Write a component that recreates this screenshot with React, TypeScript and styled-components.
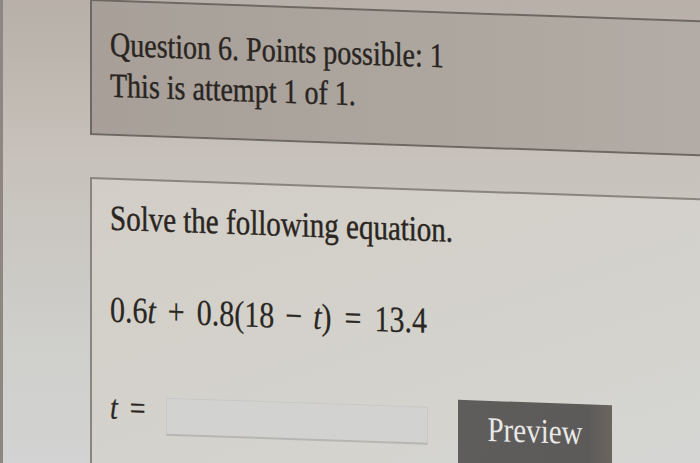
import React from "react";
import styled, { createGlobalStyle } from "styled-components";

const Global = createGlobalStyle`
  html, body { margin: 0; padding: 0; }
  body { width: 700px; height: 463px; overflow: hidden; background: #c8c3bc; }
`;

const Page = styled.div`
  box-sizing: border-box;
  width: 700px;
  height: 463px;
  overflow: hidden;
  border-left: 3px solid #8e8680;
  padding-left: 87px;
  background: linear-gradient(180deg, #b7afa8 0%, #c7c2bb 35%, #cfcfcc 75%, #d2d3d2 100%);
`;

const Sheet = styled.div`
  display: flex;
  flex-direction: column;
  gap: 42px;
  width: 660px;
  transform: skewY(2deg);
  transform-origin: 0 0;
`;

const InfoPanel = styled.section`
  box-sizing: border-box;
  margin-top: -1px;
  height: 136px;
  border: 2px solid #6f6862;
  border-right: none;
  background: linear-gradient(90deg, #a79f98 0%, #ada69f 50%, #b2ada6 100%);
  padding: 24px 0 0 18px;
`;

const QuestionPanel = styled.section`
  box-sizing: border-box;
  height: 320px;
  border-top: 2px solid #8a857f;
  border-left: 2px solid #8a857f;
  background: linear-gradient(160deg, #d2cec7 0%, #d4d2cc 50%, #d5d7d6 100%);
  padding: 20px 0 0 18px;
`;

const Line = styled.p<{ $size?: number; $lh?: number; $mt?: number }>`
  margin: ${(p) => p.$mt ?? 0}px 0 0 0;
  font-family: "Liberation Serif", "Times New Roman", serif;
  font-size: ${(p) => p.$size ?? 28}px;
  line-height: ${(p) => p.$lh ?? 41}px;
  color: #2a2521;
  -webkit-text-stroke: 0.35px currentColor;
  white-space: nowrap;
  transform: scaleY(1.22);
  transform-origin: 0 30px;
`;

const MathLine = styled(Line)`
  color: #2a2622;
  -webkit-text-stroke: 0.2px currentColor;
`;

const Var = styled.i`
  font-style: italic;
`;

const Op = styled.span<{ $gap?: number }>`
  margin: 0 ${(p) => p.$gap ?? 12}px;
`;

const AnswerRow = styled.div`
  display: flex;
  align-items: flex-start;
  margin-top: 56px;
`;

const Label = styled(Line)`
  width: 56px;
  margin-top: 2px;
  color: #2b2724;
  -webkit-text-stroke: 0.2px currentColor;
`;

const AnswerBox = styled.div`
  box-sizing: border-box;
  width: 262px;
  height: 38px;
  margin-top: 8px;
  border: 1px solid #c9c8c4;
  border-bottom: 2px solid #b7b6b2;
  background: #d2d3d1;
`;

const PreviewButton = styled.button`
  box-sizing: border-box;
  width: 154px;
  height: 80px;
  margin-left: 30px;
  border: none;
  padding: 10px 0 0 0;
  align-self: flex-start;
  display: flex;
  justify-content: center;
  align-items: flex-start;
  background: linear-gradient(90deg, #5f5d5b 0%, #5d5b59 85%, #6b6560 100%);
  color: #e9e9e8;
  font-family: "Liberation Serif", "Times New Roman", serif;
  font-size: 29px;
  line-height: 40px;
`;

const ButtonText = styled.span`
  display: inline-block;
  transform: scaleY(1.2);
  transform-origin: 0 30px;
`;

export default function App() {
  return (
    <>
      <Global />
      <Page>
        <Sheet>
          <InfoPanel>
            <Line>Question 6. Points possible: 1</Line>
            <Line>This is attempt 1 of 1.</Line>
          </InfoPanel>
          <QuestionPanel>
            <Line $size={29} $lh={40}>Solve the following equation.</Line>
            <MathLine $size={30} $mt={52} $lh={40}>
              0.6<Var>t</Var>
              <Op>+</Op>0.8(18<Op $gap={11}>−</Op>
              <Var>t</Var>)<Op $gap={13}>=</Op>13.4
            </MathLine>
            <AnswerRow>
              <Label $lh={40}>
                <Var>t</Var>
                <Op $gap={12}>=</Op>
              </Label>
              <AnswerBox />
              <PreviewButton>
                <ButtonText>Preview</ButtonText>
              </PreviewButton>
            </AnswerRow>
          </QuestionPanel>
        </Sheet>
      </Page>
    </>
  );
}
